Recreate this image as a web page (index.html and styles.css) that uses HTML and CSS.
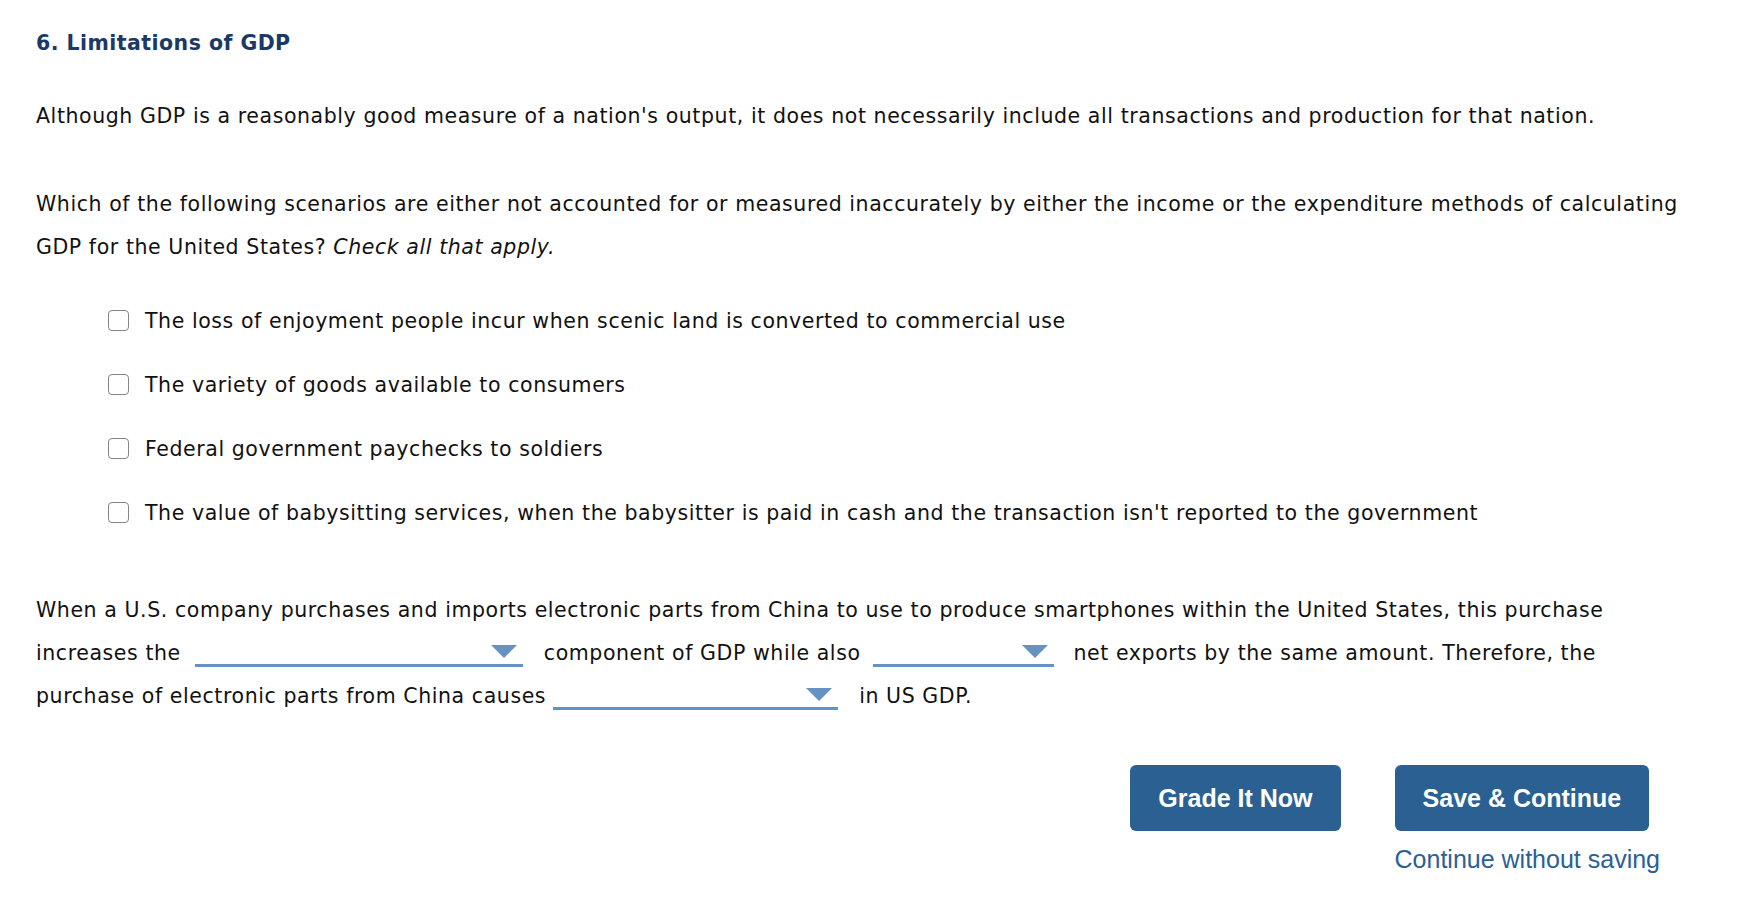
FILE: index.html
```html
<!DOCTYPE html>
<html lang="en">
<head>
<meta charset="utf-8">
<title>6. Limitations of GDP</title>
<link rel="stylesheet" href="styles.css">
</head>
<body>
<main class="page">
  <h2 class="title">6. Limitations of GDP</h2>
  <p class="para p-intro">Although GDP is a reasonably good measure of a nation's output, it does not necessarily include all transactions and production for that nation.</p>
  <p class="para p-question">Which of the following scenarios are either not accounted for or measured inaccurately by either the income or the expenditure methods of calculating GDP for the United States? <em>Check all that apply.</em></p>
  <ul class="choices">
    <li class="choice"><span class="box"></span><span class="label">The loss of enjoyment people incur when scenic land is converted to commercial use</span></li>
    <li class="choice"><span class="box"></span><span class="label">The variety of goods available to consumers</span></li>
    <li class="choice"><span class="box"></span><span class="label">Federal government paychecks to soldiers</span></li>
    <li class="choice"><span class="box"></span><span class="label">The value of babysitting services, when the babysitter is paid in cash and the transaction isn't reported to the government</span></li>
  </ul>
  <p class="para p-fill">When a U.S. company purchases and imports electronic parts from China to use to produce smartphones within the United States, this purchase increases the<span class="dd dd-1"><span class="arrow"></span></span>component of GDP while also<span class="dd dd-2"><span class="arrow"></span></span>net exports by the same amount. Therefore, the purchase of electronic parts from China causes<span class="dd dd-3"><span class="arrow"></span></span>in US GDP.</p>
  <div class="actions">
    <button class="btn">Grade It Now</button>
    <div class="save-col">
      <button class="btn">Save &amp; Continue</button>
      <a class="link" href="#">Continue without saving</a>
    </div>
  </div>
</main>
</body>
</html>
```

FILE: styles.css
```css
html, body {
  margin: 0;
  padding: 0;
  background: #ffffff;
}

.page {
  padding: 22px 50px 40px 36px;
  font-family: "DejaVu Sans", Verdana, sans-serif;
  font-size: 20.5px;
  letter-spacing: 0.58px;
  color: #111111;
}

.title {
  margin: 0 0 30px 0;
  font-size: 20.5px;
  letter-spacing: 0.45px;
  line-height: 43px;
  font-weight: bold;
  color: #1b3966;
}

.para {
  margin: 0;
  line-height: 43px;
}

.p-intro {
  margin-bottom: 45px;
}

.p-question {
  margin-bottom: 30px;
}

.choices {
  list-style: none;
  margin: 0 0 55px 0;
  padding: 0 0 0 72px;
}

.choice {
  display: flex;
  align-items: center;
  height: 43px;
  margin-bottom: 21px;
}

.choice:last-child {
  margin-bottom: 0;
}

.box {
  width: 19px;
  height: 19px;
  border: 1.5px solid #858585;
  border-radius: 4px;
  margin-right: 16px;
  flex: none;
}

.dd {
  display: inline-block;
  position: relative;
  vertical-align: middle;
  height: 22px;
  border-bottom: 3px solid #6592c2;
  margin: 0 21px 0 14px;
}

.dd-1 { width: 328px; }
.dd-2 { width: 181px; margin-left: 12px; margin-right: 20px; }
.dd-3 { width: 285px; margin-left: 7px; }

.arrow {
  position: absolute;
  right: 6px;
  top: 3px;
  width: 0;
  height: 0;
  border-left: 13px solid transparent;
  border-right: 13px solid transparent;
  border-top: 13px solid #6592c2;
}

.actions {
  display: flex;
  justify-content: flex-end;
  align-items: flex-start;
  gap: 54px;
  margin-top: 47px;
  padding-right: 29px;
  letter-spacing: 0;
}

.save-col {
  display: flex;
  flex-direction: column;
  align-items: flex-start;
}

.btn {
  height: 66px;
  padding: 0 28px;
  border: none;
  border-radius: 6px;
  background: #2a6092;
  color: #ffffff;
  font-family: "Liberation Sans", Arial, sans-serif;
  font-weight: bold;
  font-size: 25px;
  letter-spacing: 0;
  cursor: pointer;
}

.link {
  margin-top: 14px;
  font-family: "Liberation Sans", Arial, sans-serif;
  font-size: 25px;
  line-height: 28px;
  color: #2a6096;
  text-decoration: none;
}
```
